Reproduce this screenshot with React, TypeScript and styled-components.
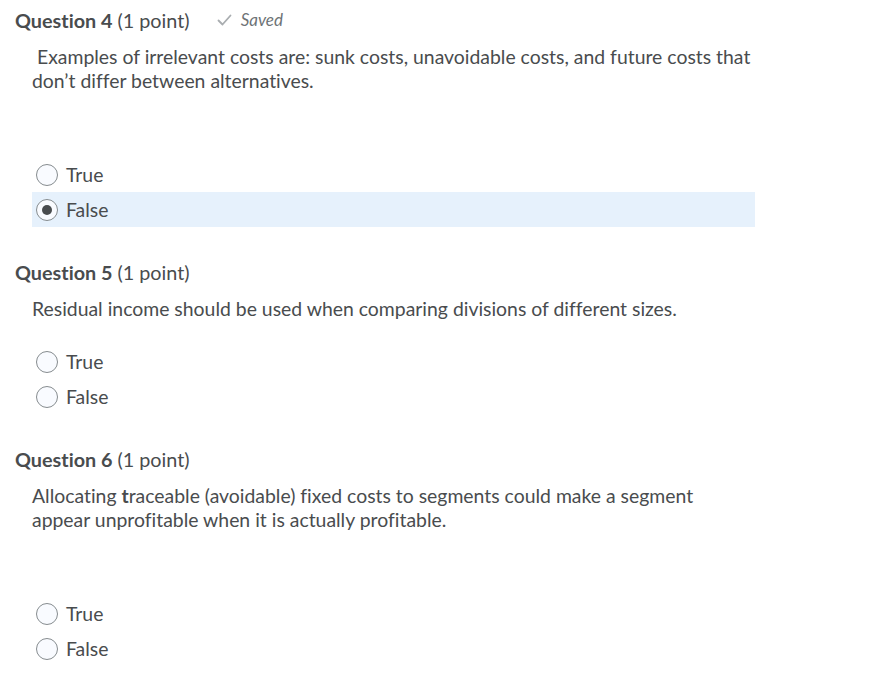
import React from "react";
import styled, { createGlobalStyle } from "styled-components";

const Global = createGlobalStyle`
  html, body {
    margin: 0;
    padding: 0;
    background: #ffffff;
  }
  body {
    font-family: Lato, "Open Sans", sans-serif;
    font-variant-ligatures: none;
    color: #494c4e;
  }
`;

const Page = styled.div`
  padding: 8px 0 0 15px;
  width: 760px;
`;

const Question = styled.section`
  margin-bottom: 33px;
`;

const Heading = styled.h2`
  display: flex;
  align-items: center;
  margin: 0;
  font-size: 19.8px;
  line-height: 24px;
  font-weight: 400;
  color: #494c4e;

  strong {
    font-weight: 700;
    margin-right: 5px;
  }
`;

const SavedTag = styled.span`
  display: inline-flex;
  align-items: center;
  gap: 9px;
  margin-left: 27px;
  font-size: 17px;
  font-style: italic;
  color: #6e7376;
`;

const Prompt = styled.p<{ $extra?: boolean }>`
  margin: 13px 0 ${(p) => (p.$extra ? 64 : 23)}px 17px;
  font-size: 19.4px;
  line-height: 24px;
  white-space: pre-wrap;
  color: #494c4e;

  b {
    font-weight: 700;
  }
`;

const Options = styled.div`
  display: flex;
  flex-direction: column;
  margin-left: 17px;
  width: 723px;
`;

const Option = styled.label<{ $checked?: boolean }>`
  display: flex;
  align-items: center;
  gap: 8px;
  height: 35px;
  padding-left: 4px;
  font-size: 19.4px;
  color: #494c4e;
  background: ${(p) => (p.$checked ? "#e6f1fc" : "transparent")};
`;

const Circle = styled.span<{ $checked?: boolean }>`
  box-sizing: border-box;
  display: flex;
  align-items: center;
  justify-content: center;
  width: 22px;
  height: 22px;
  border-radius: 50%;
  border: 1px solid #868c8f;
  background: #f9fbff;

  &::after {
    content: "";
    display: ${(p) => (p.$checked ? "block" : "none")};
    width: 10px;
    height: 10px;
    border-radius: 50%;
    background: #494c4e;
  }
`;

type Q = {
  n: number;
  text: React.ReactNode;
  extra?: boolean;
  saved?: boolean;
  checked?: string;
};

const questions: Q[] = [
  {
    n: 4,
    saved: true,
    extra: true,
    checked: "False",
    text: " Examples of irrelevant costs are: sunk costs, unavoidable costs, and future costs that\ndon\u2019t differ between alternatives.",
  },
  {
    n: 5,
    text: "Residual income should be used when comparing divisions of different sizes.",
  },
  {
    n: 6,
    extra: true,
    text: (
      <>
        Allocating <b>t</b>
        {"raceable (avoidable) fixed costs to segments could make a segment\nappear unprofitable when it is actually profitable."}
      </>
    ),
  },
];

const Check = () => (
  <svg width="15" height="12" viewBox="0 0 15 12" fill="none">
    <path d="M1.5 6.5 L5.5 10.5 L13.5 1.5" stroke="#a9adb0" strokeWidth="1.8" strokeLinecap="round" strokeLinejoin="round" />
  </svg>
);

export default function App() {
  return (
    <Page>
      <Global />
      {questions.map((q) => (
        <Question key={q.n}>
          <Heading>
            <strong>Question {q.n}</strong>(1 point)
            {q.saved && (
              <SavedTag>
                <Check />
                Saved
              </SavedTag>
            )}
          </Heading>
          <Prompt $extra={q.extra}>{q.text}</Prompt>
          <Options>
            {["True", "False"].map((o) => (
              <Option key={o} $checked={q.checked === o}>
                <Circle $checked={q.checked === o} />
                {o}
              </Option>
            ))}
          </Options>
        </Question>
      ))}
    </Page>
  );
}
